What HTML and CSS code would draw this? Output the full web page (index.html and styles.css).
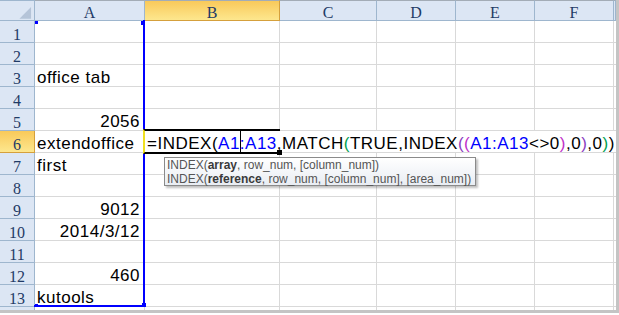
FILE: index.html
```html
<!DOCTYPE html>
<html lang="en">
<head>
  <meta charset="UTF-8">
  <meta name="viewport" content="width=device-width, initial-scale=1.0">
  <title>INDEX MATCH first non-zero</title>
  <link rel="stylesheet" href="styles.css">
</head>
<body>
  <div class="sheet">
    <div class="row head">
      <div class="rh corner">
        <svg width="35" height="20" viewBox="0 0 35 20"><polygon points="32,6 32,18 20,18" fill="#b5c4d8"/></svg>
      </div>
      <div class="ca">A</div>
      <div class="cb hl">B</div>
      <div class="cc">C</div>
      <div class="cd">D</div>
      <div class="ce">E</div>
      <div class="cf">F</div>
      <div class="cg"></div>
    </div>

    <div class="row"><div class="rh">1</div><div class="ca"></div><div class="cb"></div><div class="cc"></div><div class="cd"></div><div class="ce"></div><div class="cf"></div><div class="cg"></div></div>
    <div class="row"><div class="rh">2</div><div class="ca"></div><div class="cb"></div><div class="cc"></div><div class="cd"></div><div class="ce"></div><div class="cf"></div><div class="cg"></div></div>
    <div class="row"><div class="rh">3</div><div class="ca">office tab</div><div class="cb"></div><div class="cc"></div><div class="cd"></div><div class="ce"></div><div class="cf"></div><div class="cg"></div></div>
    <div class="row"><div class="rh">4</div><div class="ca"></div><div class="cb"></div><div class="cc"></div><div class="cd"></div><div class="ce"></div><div class="cf"></div><div class="cg"></div></div>
    <div class="row"><div class="rh">5</div><div class="ca num">2056</div><div class="cb"></div><div class="cc"></div><div class="cd"></div><div class="ce"></div><div class="cf"></div><div class="cg"></div></div>
    <div class="row">
      <div class="rh hl">6</div>
      <div class="ca">extendoffice</div>
      <div class="cb active">
        <div class="edit">=INDEX(<span class="r">A1</span><span class="caret"></span><span class="r">:A13</span>,MATCH<span class="g">(</span>TRUE,INDEX<span class="p">(</span><span class="m">(</span><span class="r">A1:A13</span>&lt;&gt;0<span class="m">)</span>,0<span class="p">)</span>,0<span class="g">)</span>)</div>
      </div>
      <div class="cc"></div><div class="cd"></div><div class="ce"></div><div class="cf"></div><div class="cg"></div>
    </div>
    <div class="row"><div class="rh">7</div><div class="ca">first</div><div class="cb"></div><div class="cc"></div><div class="cd"></div><div class="ce"></div><div class="cf"></div><div class="cg"></div></div>
    <div class="row"><div class="rh">8</div><div class="ca"></div><div class="cb"></div><div class="cc"></div><div class="cd"></div><div class="ce"></div><div class="cf"></div><div class="cg"></div></div>
    <div class="row"><div class="rh">9</div><div class="ca num">9012</div><div class="cb"></div><div class="cc"></div><div class="cd"></div><div class="ce"></div><div class="cf"></div><div class="cg"></div></div>
    <div class="row"><div class="rh">10</div><div class="ca num">2014/3/12</div><div class="cb"></div><div class="cc"></div><div class="cd"></div><div class="ce"></div><div class="cf"></div><div class="cg"></div></div>
    <div class="row"><div class="rh">11</div><div class="ca"></div><div class="cb"></div><div class="cc"></div><div class="cd"></div><div class="ce"></div><div class="cf"></div><div class="cg"></div></div>
    <div class="row"><div class="rh">12</div><div class="ca num">460</div><div class="cb"></div><div class="cc"></div><div class="cd"></div><div class="ce"></div><div class="cf"></div><div class="cg"></div></div>
    <div class="row"><div class="rh">13</div><div class="ca">kutools</div><div class="cb"></div><div class="cc"></div><div class="cd"></div><div class="ce"></div><div class="cf"></div><div class="cg"></div></div>
    <div class="row tail"><div class="rh"></div><div class="ca"></div><div class="cb"></div><div class="cc"></div><div class="cd"></div><div class="ce"></div><div class="cf"></div><div class="cg"></div></div>

    <!-- range highlight for A1:A13 -->
    <div class="ref">
      <span class="dot tl"></span>
      <span class="dot tr"></span>
      <span class="dot bl"></span>
      <span class="dot br"></span>
    </div>

    <!-- active cell frame -->
    <div class="frame"></div>
    <div class="handle"></div>

    <div class="tip">
      <div>INDEX(<b>array</b>, row_num, [column_num])</div>
      <div>INDEX(<b>reference</b>, row_num, [column_num], [area_num])</div>
    </div>
  </div>
</body>
</html>
```

FILE: styles.css
```css
body {
  margin: 0;
  background: #fff;
  font-family: "Liberation Sans", Arial, sans-serif;
  overflow: hidden;
}

.sheet {
  position: relative;
  width: 616px;
  height: 310px;
  border-right: 3px solid #c4c4c4;
  border-bottom: 3px solid #c4c4c4;
  overflow: hidden;
}

.row {
  display: flex;
  height: 22px;
}

.row > div {
  box-sizing: border-box;
  height: 100%;
  border-right: 1px solid #d9d9d9;
  border-bottom: 1px solid #d9d9d9;
  display: flex;
  align-items: flex-end;
  white-space: nowrap;
  font-size: 17px;
  line-height: 16px;
  letter-spacing: 0.5px;
  color: #000;
  padding-left: 2px;
}

.rh { width: 35px; flex: none; }
.ca { width: 110px; flex: none; }
.cb { width: 135px; flex: none; }
.cc { width: 97px; flex: none; }
.cd { width: 79px; flex: none; }
.ce { width: 79px; flex: none; }
.cf { width: 79px; flex: none; }
.cg { flex: 1; }

.row > .num {
  justify-content: flex-end;
  padding-left: 0;
  padding-right: 4px;
}

/* headers */
.row > .rh,
.head > div {
  background: #dce6f4;
  border-color: #9eb6ce;
  justify-content: center;
  padding: 0;
  font-family: "Liberation Serif", "Times New Roman", serif;
  font-size: 16px;
  line-height: 14px;
  letter-spacing: 0;
  color: #1f3b66;
}

.head {
  height: 21px;
}

.head > div {
  border-top: 1px solid #a3acb6;
}

.row > .corner {
  padding: 0;
  align-items: stretch;
}

.corner svg {
  display: block;
}

.row > .hl {
  background: linear-gradient(#f9c95a, #fde78e);
  border-right-color: #d5a03c;
  border-bottom-color: #d5a03c;
}

.head > .hl {
  border-top-color: #a3acb6;
}

.tail > div {
  border-bottom: none;
}

/* cell in edit mode */
.row > .active {
  z-index: 2;
  overflow: visible;
  padding-left: 2px;
  align-items: stretch;
}

.edit {
  background: #fff;
  height: 21px;
  padding-right: 1px;
  display: flex;
  align-items: flex-end;
  line-height: 16px;
}

.caret {
  display: inline-block;
  width: 1px;
  height: 21px;
  background: #000;
  margin-right: -1px;
  align-self: stretch;
}

.r { color: #0000ff; }
.g { color: #00a050; }
.p { color: #8a3cc0; }
.m { color: #c030c8; }

/* A1:A13 reference outline */
.ref {
  position: absolute;
  left: 34px;
  top: 20px;
  width: 111px;
  height: 287px;
  box-sizing: border-box;
  border-right: 2px solid #0000ff;
  border-bottom: 2px solid #0000ff;
  z-index: 3;
}

.dot {
  position: absolute;
  background: #0000ff;
  width: 4px;
  height: 4px;
}

.dot.tl { left: 1px; top: 1px; width: 3px; height: 3px; }
.dot.tr { right: -2px; top: 1px; }
.dot.bl { left: 1px; bottom: -2px; width: 3px; height: 3px; }
.dot.br { right: -3px; bottom: -2px; }

.frame {
  position: absolute;
  left: 143px;
  top: 129px;
  width: 137px;
  height: 25px;
  box-sizing: border-box;
  border-top: 2px solid #000;
  border-bottom: 2px solid #000;
  border-left: 2px solid #f0e020;
  z-index: 4;
}

.handle {
  position: absolute;
  left: 277px;
  top: 150px;
  width: 5px;
  height: 5px;
  background: #000;
  z-index: 4;
}

.tip {
  position: absolute;
  left: 164px;
  top: 157px;
  width: 312px;
  height: 29px;
  box-sizing: border-box;
  padding: 0 0 0 2px;
  border: 1px solid #8a8a8a;
  background: linear-gradient(#ffffff, #e9edf3);
  box-shadow: 2px 2px 2px rgba(0, 0, 0, 0.25);
  font-size: 12px;
  line-height: 14px;
  color: #555;
  white-space: nowrap;
  z-index: 5;
}

.tip b {
  color: #3a3a3a;
}
```
